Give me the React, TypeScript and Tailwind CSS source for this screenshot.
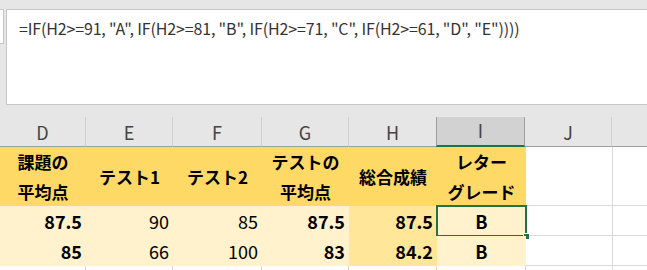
const cols = [
  { key: 'D', w: 86, label: 'D' },
  { key: 'E', w: 87, label: 'E' },
  { key: 'F', w: 89, label: 'F' },
  { key: 'G', w: 87, label: 'G' },
  { key: 'H', w: 88, label: 'H' },
  { key: 'I', w: 89, label: 'I' },
  { key: 'J', w: 87, label: 'J' },
  { key: 'K', w: 87, label: '' },
];

const font = { fontFamily: '"Noto Sans CJK JP", "Noto Sans", sans-serif' };

type Cell = { text: string; bold?: boolean; bg: string; align: 'right' | 'center' };

const rows: Cell[][] = [
  [
    { text: '87.5', bold: true, bg: 'bg-[#fff2cc]', align: 'right' },
    { text: '90', bg: 'bg-[#fff2cc]', align: 'right' },
    { text: '85', bg: 'bg-[#fff2cc]', align: 'right' },
    { text: '87.5', bold: true, bg: 'bg-[#fff2cc]', align: 'right' },
    { text: '87.5', bold: true, bg: 'bg-[#ffe699]', align: 'right' },
    { text: 'B', bold: true, bg: 'bg-[#fff2cc]', align: 'center' },
  ],
  [
    { text: '85', bold: true, bg: 'bg-[#fff2cc]', align: 'right' },
    { text: '66', bg: 'bg-[#fff2cc]', align: 'right' },
    { text: '100', bg: 'bg-[#fff2cc]', align: 'right' },
    { text: '83', bold: true, bg: 'bg-[#fff2cc]', align: 'right' },
    { text: '84.2', bold: true, bg: 'bg-[#ffe699]', align: 'right' },
    { text: 'B', bold: true, bg: 'bg-[#fff2cc]', align: 'center' },
  ],
];

const headers = [['課題の', '平均点'], ['テスト1'], ['テスト2'], ['テストの', '平均点'], ['総合成績'], ['レター', 'グレード']];

function EmptyCells({ from, h }: { from: number; h: string }) {
  return (
    <>
      {cols.slice(from).map((c) => (
        <div
          key={c.key}
          style={{ width: c.w }}
          className={`${h} shrink-0 bg-white border-r border-b border-[#d9d9d9]`}
        />
      ))}
    </>
  );
}

export default function App() {
  return (
    <div className="w-[647px] h-[270px] overflow-hidden bg-[#e6e6e6]" style={font}>
      {/* formula bar */}
      <div className="flex pt-[9px]">
        <div className="w-[4px] h-[35px] shrink-0 bg-white border border-l-0 border-[#c6c6c6]" />
        <div className="ml-[2px] flex-1 h-[96px] bg-white border border-r-0 border-[#c6c6c6] pl-[12px] pt-[7px] text-[16px] tracking-[-0.15px] leading-[22px] text-[#333] whitespace-nowrap">
          =IF(H2&gt;=91, "A", IF(H2&gt;=81, "B", IF(H2&gt;=71, "C", IF(H2&gt;=61, "D", "E"))))
        </div>
      </div>

      {/* column headers */}
      <div className="flex mt-[12px] h-[30px]">
        {cols.map((c) =>
          c.key === 'I' ? (
            <div
              key={c.key}
              style={{ width: c.w }}
              className="shrink-0 flex items-center justify-center bg-[#d2d2d2] border-l border-r border-[#a0a0a0] border-b-2 border-b-[#217346] -ml-px text-[18px] text-[#444] pb-[1px]"
            >
              {c.label}
            </div>
          ) : (
            <div
              key={c.key}
              style={{ width: c.w }}
              className="shrink-0 flex items-center justify-center border-r border-[#cfcfcf] border-b border-b-[#9e9e9e] text-[18px] text-[#444] pt-[1px]"
            >
              {c.label}
            </div>
          )
        )}
      </div>

      {/* title row */}
      <div className="flex h-[59px]">
        {headers.map((lines, i) => (
          <div
            key={i}
            style={{ width: cols[i].w }}
            className="shrink-0 flex flex-col items-center justify-center bg-[#ffd966] text-[17px] leading-[30px] font-bold text-black"
          >
            {lines.map((l) => (
              <span key={l}>{l}</span>
            ))}
          </div>
        ))}
        <EmptyCells from={6} h="h-[59px]" />
      </div>

      {/* data rows */}
      {rows.map((r, ri) => (
        <div key={ri} className="flex h-[30px]">
          {r.map((cell, ci) => (
            <div
              key={ci}
              style={{ width: cols[ci].w }}
              className={`relative shrink-0 flex items-center ${cell.bg} ${
                cell.align === 'right' ? 'justify-end pr-[4px]' : 'justify-center'
              } ${cell.bold ? 'font-bold' : 'font-normal'} text-[18px] text-black`}
            >
              {cell.text}
              {ri === 0 && ci === 5 && (
                <>
                  <div className="absolute -left-px -top-px -right-px -bottom-px border-2 border-[#217346]" />
                  <div className="absolute -right-[4px] -bottom-[4px] w-[7px] h-[7px] bg-[#217346] border border-white" />
                </>
              )}
            </div>
          ))}
          <EmptyCells from={6} h="h-[30px]" />
        </div>
      ))}

      {/* next row */}
      <div className="flex h-[30px]">
        <EmptyCells from={0} h="h-[30px]" />
      </div>
    </div>
  );
}
